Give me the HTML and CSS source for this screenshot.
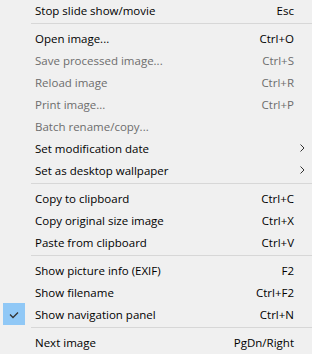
FILE: index.html
```html
<!DOCTYPE html>
<html>
<head>
<meta charset="utf-8">
<link rel="stylesheet" href="styles.css">
</head>
<body>
<div class="menu">
  <div class="item"><span class="ico"></span><span class="label">Stop slide show/movie</span><span class="key">Esc</span><span class="sub"></span></div>
  <div class="sep"></div>
  <div class="item"><span class="ico"></span><span class="label">Open image...</span><span class="key">Ctrl+O</span><span class="sub"></span></div>
  <div class="item dis"><span class="ico"></span><span class="label">Save processed image...</span><span class="key">Ctrl+S</span><span class="sub"></span></div>
  <div class="item dis"><span class="ico"></span><span class="label">Reload image</span><span class="key">Ctrl+R</span><span class="sub"></span></div>
  <div class="item dis"><span class="ico"></span><span class="label">Print image...</span><span class="key">Ctrl+P</span><span class="sub"></span></div>
  <div class="item dis"><span class="ico"></span><span class="label">Batch rename/copy...</span><span class="key"></span><span class="sub"></span></div>
  <div class="item"><span class="ico"></span><span class="label">Set modification date</span><span class="key"></span><span class="sub"><svg width="5" height="8" viewBox="0 0 5 8"><path d="M0.5 0.5 L4 4 L0.5 7.5" fill="none" stroke="#333" stroke-width="1"/></svg></span></div>
  <div class="item"><span class="ico"></span><span class="label">Set as desktop wallpaper</span><span class="key"></span><span class="sub"><svg width="5" height="8" viewBox="0 0 5 8"><path d="M0.5 0.5 L4 4 L0.5 7.5" fill="none" stroke="#333" stroke-width="1"/></svg></span></div>
  <div class="sep"></div>
  <div class="item"><span class="ico"></span><span class="label">Copy to clipboard</span><span class="key">Ctrl+C</span><span class="sub"></span></div>
  <div class="item"><span class="ico"></span><span class="label">Copy original size image</span><span class="key">Ctrl+X</span><span class="sub"></span></div>
  <div class="item"><span class="ico"></span><span class="label">Paste from clipboard</span><span class="key">Ctrl+V</span><span class="sub"></span></div>
  <div class="sep"></div>
  <div class="item"><span class="ico"></span><span class="label">Show picture info (EXIF)</span><span class="key">F2</span><span class="sub"></span></div>
  <div class="item"><span class="ico"></span><span class="label">Show filename</span><span class="key">Ctrl+F2</span><span class="sub"></span></div>
  <div class="item"><span class="ico checked"><svg width="22" height="22" viewBox="0 0 22 22"><path d="M7 11.5 L10 14.5 L15 9.5" fill="none" stroke="#333" stroke-width="1.3"/></svg></span><span class="label">Show navigation panel</span><span class="key">Ctrl+N</span><span class="sub"></span></div>
  <div class="sep"></div>
  <div class="item"><span class="ico"></span><span class="label">Next image</span><span class="key">PgDn/Right</span><span class="sub"></span></div>
</div>
</body>
</html>
```

FILE: styles.css
```css
html, body {
  margin: 0;
  padding: 0;
  background: #f0f0f0;
}
.menu {
  margin-top: -1px;
  width: 312px;
  font-family: "Open Sans", "Noto Sans", sans-serif;
  font-size: 11.5px;
  color: #000;
}
.item {
  display: flex;
  align-items: center;
  height: 22px;
}
.ico {
  flex: 0 0 22px;
  height: 22px;
  margin-left: 3px;
  margin-right: 10px;
}
.ico.checked {
  background: #90c8f6;
}
.ico svg {
  display: block;
}
.label {
  flex: 1;
  white-space: nowrap;
}
.key {
  white-space: nowrap;
}
.sub {
  flex: 0 0 18px;
  display: flex;
  align-items: center;
  padding-left: 6px;
  box-sizing: border-box;
}
.sub svg {
  display: block;
}
.dis {
  color: #6d6d6d;
}
.sep {
  padding: 2px 0 3px 31px;
}
.sep::before {
  content: "";
  display: block;
  height: 1px;
  background: #d7d7d7;
}
```
